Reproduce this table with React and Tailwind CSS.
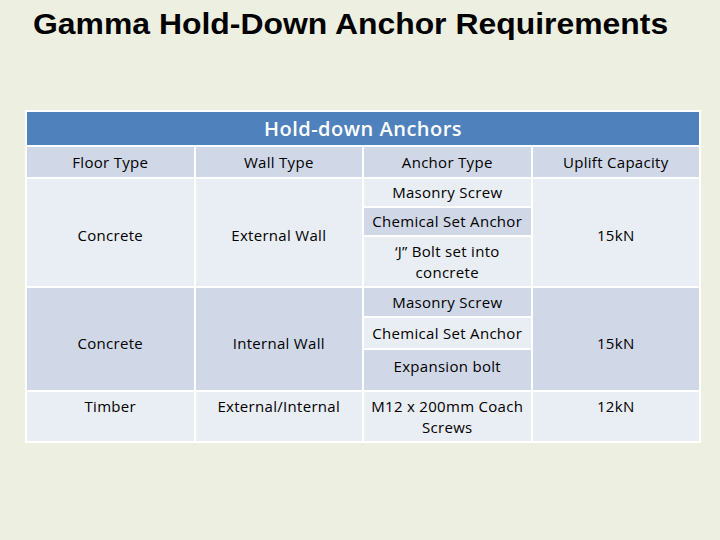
export default function App() {
  const light = "bg-[#e9edf4]";
  const dark = "bg-[#d0d8e8]";
  const cell = "flex items-center justify-center text-center text-[#000]";

  return (
    <div className="w-[720px] h-[540px] bg-[#edf0e1] overflow-hidden font-['Liberation_Sans',Arial,sans-serif]">
      <h1 className="ml-[33px] pt-[8px] text-[29px] leading-[32px] font-bold text-black origin-left scale-x-[1.1] whitespace-nowrap">
        Gamma Hold-Down Anchor Requirements
      </h1>

      <div className="ml-[25px] mt-[70px] w-[676px] bg-white p-[2px] font-['Open_Sans',sans-serif] text-[15px] leading-[21px] tracking-[0.3px]">
        <div className="grid grid-cols-4 gap-[2px]">
          <div className="col-span-4 h-[33px] bg-[#4f81bd] flex items-center justify-center text-white text-[20px] font-semibold tracking-[0.5px]">
            Hold-down Anchors
          </div>

          <div className={`${cell} ${dark} h-[30px]`}>Floor Type</div>
          <div className={`${cell} ${dark} h-[30px]`}>Wall Type</div>
          <div className={`${cell} ${dark} h-[30px]`}>Anchor Type</div>
          <div className={`${cell} ${dark} h-[30px]`}>Uplift Capacity</div>

          <div className={`${cell} ${light} h-[107px] pt-[6px]`}>Concrete</div>
          <div className={`${cell} ${light} h-[107px] pt-[6px]`}>External Wall</div>
          <div className="flex flex-col gap-[2px] h-[107px]">
            <div className={`${cell} ${light} h-[27px]`}>Masonry Screw</div>
            <div className={`${cell} ${dark} h-[27px]`}>Chemical Set Anchor</div>
            <div className={`${cell} ${light} flex-1`}>
              ‘J” Bolt set into
              <br />
              concrete
            </div>
          </div>
          <div className={`${cell} ${light} h-[107px] pt-[6px]`}>15kN</div>

          <div className={`${cell} ${dark} h-[102px] pt-[8px]`}>Concrete</div>
          <div className={`${cell} ${dark} h-[102px] pt-[8px]`}>Internal Wall</div>
          <div className="flex flex-col gap-[2px] h-[102px]">
            <div className={`${cell} ${dark} h-[28px]`}>Masonry Screw</div>
            <div className={`${cell} ${light} h-[30px]`}>Chemical Set Anchor</div>
            <div className={`${cell} ${dark} flex-1 pb-[8px]`}>Expansion bolt</div>
          </div>
          <div className={`${cell} ${dark} h-[102px] pt-[8px]`}>15kN</div>

          <div className={`flex justify-center text-center ${light} h-[49px] pt-[4px]`}>Timber</div>
          <div className={`flex justify-center text-center ${light} h-[49px] pt-[4px]`}>External/Internal</div>
          <div className={`flex justify-center text-center ${light} h-[49px] pt-[4px]`}>
            M12 x 200mm Coach
            <br />
            Screws
          </div>
          <div className={`flex justify-center text-center ${light} h-[49px] pt-[4px]`}>12kN</div>
        </div>
      </div>
    </div>
  );
}
